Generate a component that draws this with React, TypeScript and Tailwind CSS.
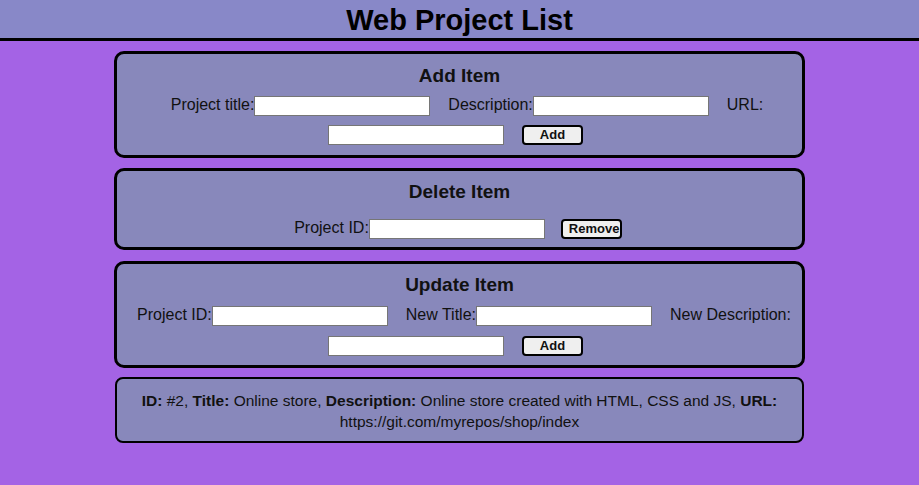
import type { ReactNode } from 'react';

const FONT = { fontFamily: '"Liberation Sans", Arial, sans-serif' };

function Field({ className = '' }: { className?: string }) {
  return (
    <input
      type="text"
      className={`inline-block align-middle w-[176px] h-[20px] bg-white border border-[#767676] ${className}`}
    />
  );
}

function Btn({ children, className = '' }: { children: ReactNode; className?: string }) {
  return (
    <button
      type="button"
      className={`inline-block align-middle w-[61px] h-[20px] px-[6px] bg-[#efefef] border-2 border-black rounded-[4px] text-[13px] font-bold leading-none whitespace-nowrap text-left overflow-visible ${className}`}
    >
      <span className="block text-center">{children}</span>
    </button>
  );
}

function Panel({ title, children, className = '' }: { title: string; children: ReactNode; className?: string }) {
  return (
    <section
      className={`mx-auto w-[691px] bg-[#8888bb] border-[3px] border-black rounded-[10px] text-center ${className}`}
    >
      <h3 className="text-[19px] font-bold leading-[24px]">{title}</h3>
      {children}
    </section>
  );
}

export default function App() {
  return (
    <div className="min-h-[485px] bg-[#a463e5] text-[#111] pb-10" style={FONT}>
      {/* Header */}
      <header className="h-[41px] bg-[#8888c8] border-b-[3px] border-black flex items-center justify-center pt-[2px]">
        <h1 className="text-[29px] font-bold leading-none text-black">Web Project List</h1>
      </header>

      <div className="flex flex-col pt-[10px]">
        {/* Add */}
        <Panel title="Add Item" className="h-[107px] pt-[10px]">
          <div className="mt-[2px] text-[16px] leading-[29px]">
            <label className="ml-[15px]">Project title:</label>
            <Field className="mr-[18px]" />
            <label>Description:</label>
            <Field className="mr-[18px]" />
            <label>URL:</label>
            <Field className="mr-[18px]" />
            <Btn className="mr-[8px]">Add</Btn>
          </div>
        </Panel>

        {/* Delete */}
        <Panel title="Delete Item" className="h-[82px] pt-[9px] mt-[10px]">
          <div className="mt-[13px] text-[16px] leading-[22px]">
            <label>Project ID:</label>
            <Field className="mr-[16px]" />
            <Btn className="mr-[3px]">Remove</Btn>
          </div>
        </Panel>

        {/* Update */}
        <Panel title="Update Item" className="h-[107px] pt-[9px] mt-[11px]">
          <div className="mt-[3px] text-[16px] leading-[30px]">
            <label className="ml-[9px]">Project ID:</label>
            <Field className="mr-[18px]" />
            <label>New Title:</label>
            <Field className="mr-[18px]" />
            <label>New Description:</label>
            <Field className="mr-[18px]" />
            <Btn className="mr-[8px]">Add</Btn>
          </div>
        </Panel>

        {/* Result */}
        <section className="mx-auto mt-[9px] w-[689px] bg-[#8888bb] border-2 border-black rounded-[8px] text-center text-[15.5px] leading-[21px] px-[10px] pt-[11px] pb-[9px]">
          <b>ID:</b> #2, <b>Title:</b> Online store, <b>Description:</b> Online store created with HTML, CSS and JS,{' '}
          <b>URL:</b> https://git.com/myrepos/shop/index
        </section>
      </div>
    </div>
  );
}
